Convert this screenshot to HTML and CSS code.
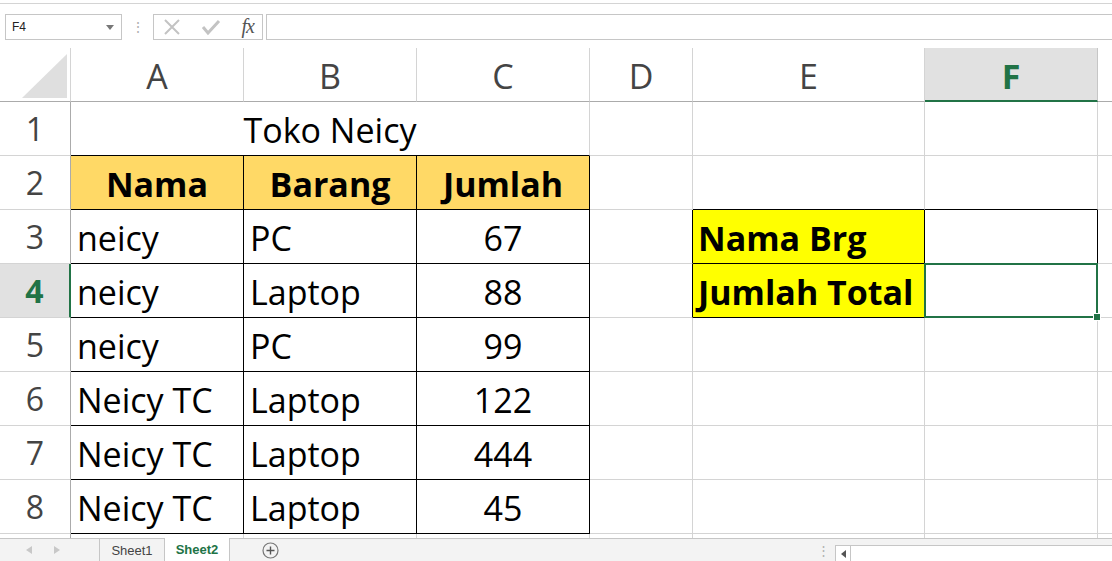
FILE: index.html
```html
<!DOCTYPE html>
<html>
<head>
<meta charset="utf-8">
<link rel="stylesheet" href="styles.css">
</head>
<body>
<div class="app">
  <div class="topline"></div>
  <div class="fbar">
    <div class="namebox"><span>F4</span><svg class="dd" width="8" height="5" viewBox="0 0 8 5"><path d="M0 0H8L4 5Z" fill="#777"/></svg></div>
    <div class="vdots">⋮</div>
    <div class="fxbox">
      <svg width="18" height="18" viewBox="0 0 18 18"><path d="M2 2L16 16M16 2L2 16" stroke="#c3c3c3" stroke-width="2" fill="none"/></svg>
      <svg width="20" height="18" viewBox="0 0 20 18"><path d="M2 9L7 15L18 3" stroke="#c3c3c3" stroke-width="3" fill="none"/></svg>
      <span class="fx">fx</span>
    </div>
    <div class="finput"></div>
  </div>
  <div class="sheet">
    <div class="corner"><svg width="45" height="44" viewBox="0 0 45 44"><path d="M45 0V44H0Z" fill="#dfdfdf"/></svg></div>
    <div class="ch">A</div><div class="ch">B</div><div class="ch">C</div><div class="ch">D</div><div class="ch">E</div><div class="ch sel">F</div><div class="ch"></div>

    <div class="rh">1</div>
    <div class="c title bb">Toko Neicy</div><div class="c"></div><div class="c"></div><div class="c"></div><div class="c"></div>

    <div class="rh">2</div>
    <div class="c hd bx">Nama</div><div class="c hd bx">Barang</div><div class="c hd bx">Jumlah</div><div class="c"></div><div class="c bb"></div><div class="c bb"></div><div class="c"></div>

    <div class="rh">3</div>
    <div class="c bx">neicy</div><div class="c bx">PC</div><div class="c bx num">67</div><div class="c br"></div><div class="c bx yl">Nama Brg</div><div class="c bx"></div><div class="c"></div>

    <div class="rh rsel">4</div>
    <div class="c bx">neicy</div><div class="c bx">Laptop</div><div class="c bx num">88</div><div class="c br"></div><div class="c bx yl">Jumlah Total</div><div class="c bx active"></div><div class="c"></div>

    <div class="rh">5</div>
    <div class="c bx">neicy</div><div class="c bx">PC</div><div class="c bx num">99</div><div class="c"></div><div class="c"></div><div class="c"></div><div class="c"></div>

    <div class="rh">6</div>
    <div class="c bx">Neicy TC</div><div class="c bx">Laptop</div><div class="c bx num">122</div><div class="c"></div><div class="c"></div><div class="c"></div><div class="c"></div>

    <div class="rh">7</div>
    <div class="c bx">Neicy TC</div><div class="c bx">Laptop</div><div class="c bx num">444</div><div class="c"></div><div class="c"></div><div class="c"></div><div class="c"></div>

    <div class="rh">8</div>
    <div class="c bx">Neicy TC</div><div class="c bx">Laptop</div><div class="c bx num">45</div><div class="c"></div><div class="c"></div><div class="c"></div><div class="c"></div>

    <div class="rh"></div>
    <div class="c"></div><div class="c"></div><div class="c"></div><div class="c"></div><div class="c"></div><div class="c"></div><div class="c"></div>
  </div>
  <div class="tabs">
    <div class="navs">
      <svg width="6" height="8" viewBox="0 0 6 8"><path d="M6 0V8L0 4Z" fill="#c8c8c8"/></svg>
      <svg width="6" height="8" viewBox="0 0 6 8"><path d="M0 0V8L6 4Z" fill="#c8c8c8"/></svg>
    </div>
    <div class="tab">Sheet1</div>
    <div class="tab on">Sheet2</div>
    <div class="add"><svg width="17" height="17" viewBox="0 0 17 17"><circle cx="8.5" cy="8.5" r="7.5" stroke="#777" stroke-width="1.2" fill="none"/><path d="M8.5 4.5V12.5M4.5 8.5H12.5" stroke="#555" stroke-width="1.4"/></svg></div>
    <div class="spacer"></div>
    <div class="hdots">⋮</div>
    <div class="hscroll">
      <div class="harrow"><svg width="5" height="8" viewBox="0 0 5 8"><path d="M5 0V8L0 4Z" fill="#555"/></svg></div>
      <div class="htrack"></div>
    </div>
  </div>
</div>
</body>
</html>
```
FILE: styles.css
```css
* { box-sizing: border-box; }
html, body { margin: 0; padding: 0; background: #fff; }
body { width: 1112px; height: 561px; overflow: hidden; font-family: "Open Sans", "Liberation Sans", sans-serif; }

.app { display: flex; flex-direction: column; width: 1112px; height: 561px; overflow: hidden; }

.topline { height: 4px; border-bottom: 1px solid #d4d4d4; flex: none; }

.fbar { display: flex; align-items: center; height: 26px; margin-top: 10px; padding-left: 5px; flex: none; }
.namebox { width: 117px; height: 26px; border: 1px solid #c6c6c6; display: flex; align-items: center; justify-content: space-between; padding: 0 7px 0 6px; font-family: "Liberation Sans", sans-serif; font-size: 12px; color: #222; }
.vdots { width: 31px; text-align: center; color: #b0b0b0; font-size: 14px; line-height: 14px; }
.fxbox { width: 110px; height: 26px; border: 1px solid #c6c6c6; display: flex; align-items: center; justify-content: space-between; padding: 0 8px 0 9px; }
.fx { font-family: "Liberation Serif", "DejaVu Serif", serif; font-style: italic; font-size: 20px; color: #555; letter-spacing: -1px; line-height: 20px; padding-bottom: 3px; }
.finput { flex: 1; height: 26px; margin-left: 3px; border: 1px solid #c6c6c6; border-right: none; }

.sheet { margin-top: 8px; height: 490px; display: grid; grid-template-columns: 71px 173px 173px 173px 103px 232px 173px 20px; grid-template-rows: 54px repeat(8, 54px) 10px; overflow: hidden; flex: none; }

.corner { border-right: 1px solid #d4d4d4; border-bottom: 1px solid #ababab; display: flex; align-items: flex-end; justify-content: flex-end; padding: 0 3px 3px 0; margin-top: 0; }
.ch { border-right: 1px solid #d4d4d4; border-bottom: 1px solid #ababab; display: flex; align-items: center; justify-content: center; font-size: 34px; color: #444; padding-top: 2px; }
.ch.sel { background: #e1e1e1; color: #217346; font-weight: 700; border-bottom: 2px solid #217346; border-right-color: #c6c6c6; padding-top: 4px; }

.rh { border-right: 1px solid #ababab; border-bottom: 1px solid #d4d4d4; display: flex; align-items: center; justify-content: center; font-size: 32px; color: #444; }
.rh.rsel { background: #e1e1e1; color: #217346; font-weight: 700; border-right: 2px solid #217346; }

.c { border-right: 1px solid #d4d4d4; border-bottom: 1px solid #d4d4d4; display: flex; align-items: center; padding: 2px 6px 0; font-size: 34px; color: #000; white-space: nowrap; overflow: visible; position: relative; }
.c.title { grid-column: span 3; justify-content: center; }
.c.bb { border-bottom-color: #000; }
.c.br { border-right-color: #000; }
.c.bx { border-right-color: #000; border-bottom-color: #000; }
.c.hd { background: #ffd966; font-weight: 700; justify-content: center; }
.c.num { justify-content: center; }
.c.yl { background: #ffff00; font-weight: 700; padding-left: 5px; }
.c.active::after { content: ""; position: absolute; left: -1px; top: -1px; right: -1px; bottom: -1px; border: 2px solid #217346; }
.c.active::before { content: ""; position: absolute; right: -4px; bottom: -4px; width: 6px; height: 6px; background: #217346; border: 1px solid #fff; z-index: 2; }

.tabs { flex: 1; display: flex; align-items: stretch; background: #f3f3f3; border-top: 1px solid #c6c6c6; font-family: "Liberation Sans", sans-serif; font-size: 13px; }
.navs { width: 100px; display: flex; align-items: center; gap: 22px; padding-left: 26px; border-right: 1px solid #c6c6c6; }
.tab { width: 65px; display: flex; align-items: center; justify-content: center; color: #444; border-right: 1px solid #c6c6c6; }
.tab.on { background: #fff; color: #217346; font-weight: 700; margin-top: -1px; }
.add { width: 80px; display: flex; align-items: center; justify-content: center; padding-top: 1px; }
.spacer { flex: 1; }
.hdots { width: 24px; color: #b0b0b0; font-size: 13px; display: flex; align-items: center; justify-content: center; }
.hscroll { width: 277px; margin-top: 6px; display: flex; border: 1px solid #c6c6c6; border-right: none; border-bottom: none; background: #fff; }
.harrow { width: 15px; border-right: 1px solid #c6c6c6; display: flex; align-items: center; justify-content: center; }
.htrack { flex: 1; }
```
